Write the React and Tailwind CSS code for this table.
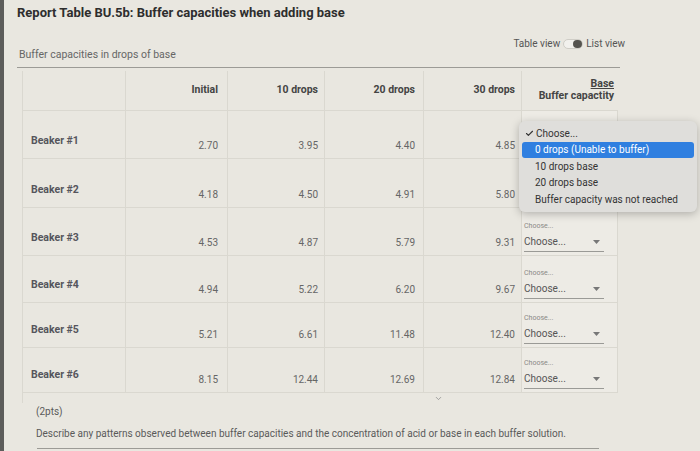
import { Check, ChevronDown } from 'lucide-react'

const rows = [
  { name: 'Beaker #1', vals: ['2.70', '3.95', '4.40', '4.85'], h: 'h-[48px]', menu: true },
  { name: 'Beaker #2', vals: ['4.18', '4.50', '4.91', '5.80'], h: 'h-[49px]', menu: true },
  { name: 'Beaker #3', vals: ['4.53', '4.87', '5.79', '9.31'], h: 'h-[48px]' },
  { name: 'Beaker #4', vals: ['4.94', '5.22', '6.20', '9.67'], h: 'h-[47px]' },
  { name: 'Beaker #5', vals: ['5.21', '6.61', '11.48', '12.40'], h: 'h-[45px]' },
  { name: 'Beaker #6', vals: ['8.15', '12.44', '12.69', '12.84'], h: 'h-[45px]' },
]

const pads = ['pr-[9px]', 'pr-[6px]', 'pr-[8px]', 'pr-[6px]']
const heads = ['Initial', '10 drops', '20 drops', '30 drops']

function ChooseSelect(){
  return (
    <div className="w-[80px] ml-[2px]">
      <div className="text-[7px] text-[#8a8a86] leading-none mb-[7px]">Choose...</div>
      <div className="flex items-center justify-between border-b border-[#9a9a96] pb-[4px]">
        <span className="text-[10px] text-[#555] leading-none">Choose...</span>
        <svg width="7" height="4" viewBox="0 0 7 4" className="mr-[4px]"><path d="M0 0h7L3.5 4z" fill="#777"/></svg>
      </div>
    </div>
  )
}

export default function App(){
  return (
    <div className="w-[700px] h-[451px] overflow-hidden bg-[#e9e7e0] flex font-['Roboto',sans-serif]">
      <div className="w-[4px] bg-[#5d5d5b] shrink-0" />
      <div className="relative flex-1 pl-[13px]">
        <h1 className="pt-[4px] text-[13px] font-bold text-[#2e2e2e] leading-[17px]">
          Report Table BU.5b: Buffer capacities when adding base
        </h1>

        <div className="flex justify-end w-[608px] mt-[18px] items-center gap-[3px] text-[10px] text-[#555] leading-none">
          <span>Table view</span>
          <span className="w-[20px] h-[10px] rounded-full bg-[#f2f1ed] border border-[#cfcdc6] flex justify-end">
            <span className="w-[9px] h-[8px] rounded-full bg-[#55544f]" />
          </span>
          <span>List view</span>
        </div>

        <div className="w-[603px] mt-[1px] pl-[2px] pb-[6px] border-b border-[#9c9b96] text-[10.5px] text-[#666] leading-none">
          Buffer capacities in drops of base
        </div>

        <div className="ml-[5px] mt-[3px] w-[596px] border-l border-[#dad8d0]">
          <div className="grid grid-cols-[103px_102px_97px_99px_98px_96px] h-[40px] border-b border-[#dad8d0]">
            <div className="border-r border-[#dad8d0]" />
            {heads.map((t, i) => (
              <div key={t} className={`flex items-center justify-end border-r border-[#dad8d0] text-[10.5px] font-bold text-[#444] ${pads[i]}`}>{t}</div>
            ))}
            <div className="flex flex-col items-end justify-center pr-[4px] text-[10.5px] font-bold text-[#444] leading-[12px]">
              <span className="underline">Base</span>
              <span>Buffer capactity</span>
            </div>
          </div>

          {rows.map(r => (
            <div key={r.name} className={`grid grid-cols-[103px_102px_97px_99px_98px_96px] border-b border-[#dad8d0] ${r.h}`}>
              <div className="flex items-end pl-[8px] pb-[9px] border-r border-[#dad8d0] text-[10.5px] font-bold text-[#55555c]">{r.name}</div>
              {r.vals.map((v, i) => (
                <div key={i} className={`flex items-end justify-end pb-[5px] border-r border-[#dad8d0] text-[10px] text-[#666] ${pads[i]}`}>{v}</div>
              ))}
              <div className="flex items-end pb-[3px] bg-[#edebe5] border-r border-[#dad8d0]">
                {!r.menu && <ChooseSelect />}
              </div>
            </div>
          ))}

          <div className="w-[420px] flex justify-end pt-[1px]">
            <ChevronDown size={9} className="text-[#888]" />
          </div>
        </div>

        <div className="pl-[19px] mt-[4px] text-[10px] text-[#5a5a5a] leading-none">(2pts)</div>
        <div className="pl-[19px] mt-[12px] text-[10px] text-[#5a5a5a] leading-none">
          Describe any patterns observed between buffer capacities and the concentration of acid or base in each buffer solution.
        </div>
        <div className="ml-[20px] mt-[9px] w-[562px] border-t border-[#9c9b96]" />

        <div className="absolute left-[515px] top-[121px] w-[178px] rounded-[6px] bg-[#dfdedb] shadow-[0_2px_8px_rgba(0,0,0,0.25)] py-[4px] px-[3px] text-[10px] text-[#333] leading-none">
          <div className="flex items-center h-[17px] pl-[3px] gap-[2px]">
            <Check size={9} strokeWidth={3} />
            <span>Choose...</span>
          </div>
          <div className="flex items-center h-[16px] pl-[13px] rounded-[3px] bg-[#2f7fe0] text-white">0 drops (Unable to buffer)</div>
          <div className="flex items-center h-[17px] pl-[13px]">10 drops base</div>
          <div className="flex items-center h-[16px] pl-[13px]">20 drops base</div>
          <div className="flex items-center h-[17px] pl-[13px]">Buffer capacity was not reached</div>
        </div>
      </div>
    </div>
  )
}
